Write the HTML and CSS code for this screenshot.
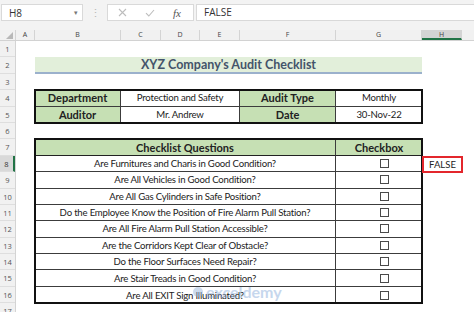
FILE: index.html
```html
<!DOCTYPE html>
<html lang="en">
<head>
    <meta charset="UTF-8">
    <title>Audit Checklist</title>
    <link rel="stylesheet" href="styles.css">
</head>
<body>
<div class="toolbar">
    <div class="namebox"><span>H8</span><span class="caret">&#9662;</span></div>
    <div class="grip">&#8942;</div>
    <div class="fxbox">
        <svg class="icon" width="9" height="9" viewBox="0 0 9 9"><path d="M1 1 8 8M8 1 1 8" stroke="#bdbdbd" stroke-width="1.1" fill="none"/></svg>
        <svg class="icon" width="10" height="8" viewBox="0 0 10 8"><path d="M1 4.2 3.8 7 9 1" stroke="#bdbdbd" stroke-width="1.1" fill="none"/></svg>
        <span class="fx">fx</span>
    </div>
    <div class="formula">FALSE</div>
</div>

<div class="colheads">
    <div class="corner"><svg width="7" height="7" viewBox="0 0 7 7"><path d="M7 0V7H0Z" fill="#b8b8b8"/></svg></div>
    <div class="ch col-a">A</div>
    <div class="ch col-b">B</div>
    <div class="ch col-c">C</div>
    <div class="ch col-d">D</div>
    <div class="ch col-e">E</div>
    <div class="ch col-f">F</div>
    <div class="ch col-g">G</div>
    <div class="ch col-h active">H</div>
    <div class="ch col-i"></div>
</div>

<div class="sheet">
    <div class="rowheads">
        <div class="rh">1</div>
        <div class="rh">2</div>
        <div class="rh">3</div>
        <div class="rh">4</div>
        <div class="rh">5</div>
        <div class="rh">6</div>
        <div class="rh">7</div>
        <div class="rh active">8</div>
        <div class="rh">9</div>
        <div class="rh">10</div>
        <div class="rh">11</div>
        <div class="rh">12</div>
        <div class="rh">13</div>
        <div class="rh">14</div>
        <div class="rh">15</div>
        <div class="rh">16</div>
        <div class="rh">17</div>
    </div>

    <div class="canvas">
        <div class="row"></div>
        <div class="title">XYZ Company's Audit Checklist</div>
        <div class="row"></div>

        <div class="info">
            <div class="cell head">Department</div>
            <div class="cell">Protection and Safety</div>
            <div class="cell head">Audit Type</div>
            <div class="cell last">Monthly</div>
            <div class="cell head bottom">Auditor</div>
            <div class="cell bottom">Mr. Andrew</div>
            <div class="cell head bottom">Date</div>
            <div class="cell last bottom">30-Nov-22</div>
        </div>

        <div class="row"></div>

        <div class="checklist-area">
            <div class="checklist">
                <div class="cell head">Checklist Questions</div>
                <div class="cell head last">Checkbox</div>

                <div class="cell">Are Furnitures and Charis in Good Condition?</div>
                <div class="cell last box"><span class="check"></span></div>
                <div class="cell">Are All Vehicles in Good Condition?</div>
                <div class="cell last box"><span class="check"></span></div>
                <div class="cell">Are All Gas Cylinders in Safe Position?</div>
                <div class="cell last box"><span class="check"></span></div>
                <div class="cell">Do the Employee Know the Position of Fire Alarm Pull Station?</div>
                <div class="cell last box"><span class="check"></span></div>
                <div class="cell">Are All Fire Alarm Pull Station Accessible?</div>
                <div class="cell last box"><span class="check"></span></div>
                <div class="cell">Are the Corridors Kept Clear of Obstacle?</div>
                <div class="cell last box"><span class="check"></span></div>
                <div class="cell">Do the Floor Surfaces Need Repair?</div>
                <div class="cell last box"><span class="check"></span></div>
                <div class="cell">Are Stair Treads in Good Condition?</div>
                <div class="cell last box"><span class="check"></span></div>
                <div class="cell bottom">Are All EXIT Sign Illuminated?</div>
                <div class="cell last bottom box"><span class="check"></span></div>
            </div>
            <div class="side">
                <div class="result">FALSE</div>
            </div>

            <!-- watermark -->
            <div class="watermark">
                <span class="wm-logo"></span>
                <span class="wm-text">exceldemy</span>
            </div>
        </div>
    </div>
</div>
</body>
</html>
```

FILE: styles.css
```css
* {
    box-sizing: border-box;
}
body {
    margin: 0;
    width: 474px;
    height: 312px;
    overflow: hidden;
    background: #fff;
    font-family: "Lato", sans-serif;
    color: #222;
}

/* formula bar */
.toolbar {
    display: flex;
    align-items: flex-start;
    height: 30px;
    padding: 4px 0 0 1px;
    background: #f3f3f3;
    font-family: "Open Sans", sans-serif;
}
.namebox {
    display: flex;
    align-items: center;
    justify-content: space-between;
    width: 82px;
    height: 17px;
    padding: 0 4px 0 7px;
    background: #fff;
    border: 1px solid #d9d9d9;
    font-size: 10px;
    color: #333;
}
.caret {
    font-size: 7px;
    color: #777;
}
.grip {
    width: 24px;
    text-align: center;
    line-height: 17px;
    font-size: 11px;
    color: #b8b8b8;
}
.fxbox {
    display: flex;
    align-items: center;
    width: 87px;
    height: 17px;
    padding-left: 10px;
    background: #fff;
    border: 1px solid #d9d9d9;
}
.fxbox .icon {
    margin-right: 18px;
}
.fx {
    font-family: "Liberation Serif", serif;
    font-style: italic;
    font-size: 11px;
    color: #555;
}
.formula {
    flex: 1;
    height: 17px;
    margin-left: 2px;
    padding-left: 7px;
    background: #fff;
    border: 1px solid #d9d9d9;
    border-right: none;
    font-size: 10px;
    line-height: 15px;
    color: #333;
}

/* column headers */
.colheads {
    display: flex;
    height: 11px;
    background: #f1f1f1;
    border-bottom: 1px solid #d2d2d2;
    font-family: "Open Sans", sans-serif;
}
.corner {
    display: flex;
    align-items: flex-end;
    justify-content: flex-end;
    width: 16px;
    padding: 0 2px 1px 0;
    border-right: 1px solid #d4d4d4;
}
.ch {
    border-right: 1px solid #d4d4d4;
    text-align: center;
    font-size: 7px;
    line-height: 10px;
    color: #444;
}
.ch.active {
    background: #d4d4d4;
    border-bottom: 2px solid #217346;
}
.col-a { width: 19px; }
.col-b { width: 86px; }
.col-c { width: 40px; }
.col-d { width: 39px; }
.col-e { width: 40px; }
.col-f { width: 96px; }
.col-g { width: 86px; }
.col-h { width: 40px; }
.col-i { flex: 1; border-right: none; }

/* grid body */
.sheet {
    display: flex;
}
.rowheads {
    width: 16px;
    background: #f1f1f1;
    border-right: 1px solid #d4d4d4;
    font-family: "Open Sans", sans-serif;
}
.rh {
    height: 16.4px;
    border-bottom: 1px solid #dedede;
    text-align: center;
    font-size: 7.5px;
    line-height: 16px;
    color: #555;
}
.rh.active {
    background: #d9d9d9;
    border-right: 2px solid #217346;
    color: #333;
}
.canvas {
    flex: 1;
    padding-left: 19px;
}
.row {
    height: 16.4px;
}

.title {
    width: 387px;
    height: 16.4px;
    background: #e2efda;
    border-bottom: 2px solid #9bb1cc;
    text-align: center;
    font-weight: bold;
    font-size: 12.5px;
    line-height: 15px;
    color: #44546a;
}

/* tables */
.info,
.checklist {
    display: grid;
    outline: 2px solid #111;
    outline-offset: -1px;
}
.info {
    width: 387px;
    grid-template-columns: 86px 119px 96px 86px;
    grid-auto-rows: 16.4px;
}
.checklist {
    width: 387px;
    grid-template-columns: 301px 86px;
    grid-auto-rows: 16.4px;
}
.cell {
    display: flex;
    align-items: center;
    justify-content: center;
    border-right: 1px solid #3c3c3c;
    border-bottom: 1px solid #3c3c3c;
    font-size: 9.6px;
    letter-spacing: -0.2px;
    white-space: nowrap;
}
.cell.last {
    border-right: none;
}
.cell.bottom {
    border-bottom: none;
}
.cell.head {
    background: #c6e0b4;
    font-weight: bold;
    font-size: 11px;
    letter-spacing: 0;
}
.checklist .cell.head {
    border-bottom: 1px solid #222;
}
.box {
    padding-left: 10px;
}
.check {
    width: 9px;
    height: 9px;
    border: 1px solid #4a4a4a;
    background: #fff;
}

.checklist-area {
    position: relative;
    display: flex;
}
.side {
    width: 41px;
    padding-top: 16.4px;
}
.result {
    height: 17px;
    border: 2px solid #e3262c;
    text-align: center;
    font-size: 9.5px;
    line-height: 13px;
    color: #222;
}

.watermark {
    position: absolute;
    left: 158px;
    top: 146px;
    display: flex;
    align-items: center;
    gap: 3px;
    opacity: 0.5;
}
.wm-logo {
    width: 10px;
    height: 10px;
    border-radius: 50%;
    background: #9cb8dc;
}
.wm-text {
    font-size: 16px;
    font-weight: bold;
    line-height: 14px;
    color: #8fb0dc;
}
```
